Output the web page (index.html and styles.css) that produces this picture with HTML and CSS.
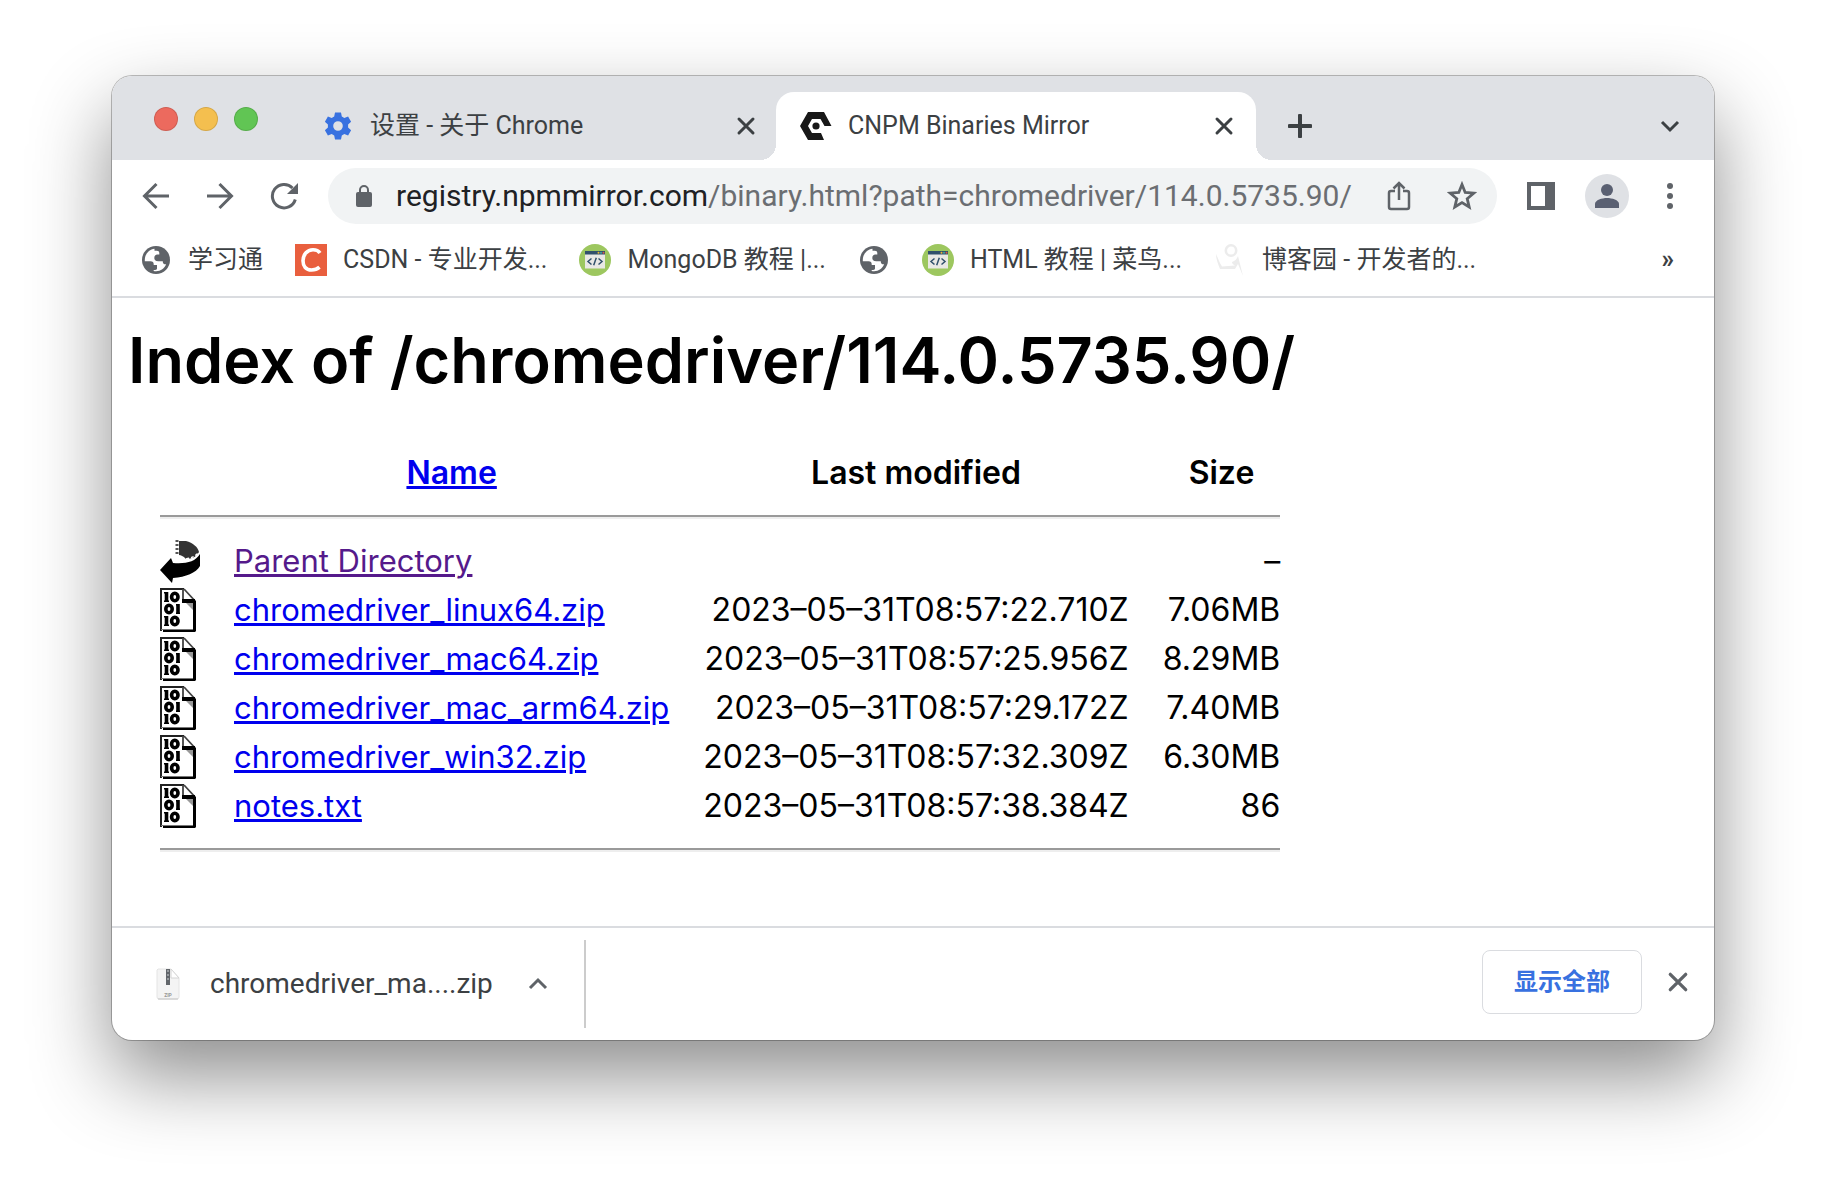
FILE: index.html
```html
<!DOCTYPE html>
<html lang="zh-CN">
<head>
  <meta charset="UTF-8" />
  <meta name="viewport" content="width=device-width, initial-scale=1.0"/>
  <title>CNPM Binaries Mirror</title>
  <link rel="stylesheet" href="styles.css">
</head>
<body>
  <!-- shared icons -->
  <svg class="sprite" aria-hidden="true">
    <symbol id="close" viewBox="0 0 20 20"><path d="M3 3 17 17M17 3 3 17" fill="none" stroke="currentColor" stroke-width="3" stroke-linecap="round"/></symbol>
    <symbol id="globe" viewBox="-2 -2 32 32">
      <circle cx="14" cy="14" r="14" fill="#5f6368"/>
      <path d="M12.500 2.700C7 3.300 2.800 8.200 2.800 14v1.200h5.700c2.300 0 3.200 1.200 3.200 3v.9h3.300v3.300c0 1.500-1.300 1.500-3.300 1.500v1.100c5.800 1.200 10.600-2 12.400-6.700-1.400.3-3.300-.3-3.300-2.200v-.9h-4.600c-2.800 0-3.900-1.600-3.900-3.300 0-2.200 1.500-3.300 3.900-3.300h1.100V6.900c0-1.400-1-2.200-2.400-2.200h-2.400z" fill="#fff"/>
    </symbol>
    <symbol id="runoob" viewBox="0 0 32 32">
      <circle cx="16" cy="16" r="16" fill="#9dc75f"/>
      <path d="M6 7h20v17.500H6z" fill="#e9e8e4"/>
      <path d="M6 7h20v3.500H6z" fill="#31506b"/>
      <circle cx="19.500" cy="8.800" r="1" fill="#e8b53a"/><circle cx="22" cy="8.800" r="1" fill="#3fa9a0"/><circle cx="24.500" cy="8.800" r="1" fill="#dc5847"/>
      <path d="M12.500 14.500 9 17.500l3.500 3M19.500 14.500l3.500 3-3.500 3M17.300 13.800l-2.600 7.400" fill="none" stroke="#31506b" stroke-width="1.500"/>
    </symbol>
    <symbol id="binary" viewBox="0 0 36 44">
      <path d="M1 1h23l11 12v30H1z" fill="#fff"/>
      <path d="M25 14h9v9z" fill="#999"/>
      <path d="M1 43V1h23" fill="none" stroke="#222" stroke-width="2"/>
      <path d="M23 1v12h12L24 1" fill="#fff" stroke="#444" stroke-width="1.800"/>
      <path d="M22 13h13" stroke="#000" stroke-width="4"/>
      <path d="M34.500 13v30M3 42.500h32.500" fill="none" stroke="#000" stroke-width="3"/>
      <path d="M1 41.500h32" stroke="#777"/>
      <g fill="none" stroke="#000" stroke-width="3.600">
        <path d="M6.500 4v10M18 16v10M6.500 28v10"/>
        <path d="M4 4.800h3M4 13.200h5M4 28.800h3M4 37.200h5M16 16.800h3M16 25.200h4" stroke-width="1.600"/>
        <ellipse cx="14.800" cy="9" rx="3.200" ry="3.800"/><ellipse cx="9" cy="21" rx="3.200" ry="3.800"/><ellipse cx="14.800" cy="33" rx="3.200" ry="3.800"/>
      </g>
    </symbol>
  </svg>

  <div class="window">
    <header class="tab-strip">
      <div class="lights">
        <button class="light red" aria-label="Close window"></button>
        <button class="light yellow" aria-label="Minimize"></button>
        <button class="light green" aria-label="Zoom"></button>
      </div>
      <div class="tab">
        <svg class="tab-icon" viewBox="0 0 28 28"><path fill="#3871e0" fill-rule="evenodd" d="M11 .5h6l.8 4 2.500 1.500 3.800-1.400 3 5.200-3 2.700v3l3 2.700-3 5.200-3.800-1.400-2.500 1.500-.8 4h-6l-.8-4L7.700 22l-3.800 1.400-3-5.200 3-2.700v-3l-3-2.700 3-5.200L7.700 6l2.500-1.500zM14 9.200a4.800 4.800 0 1 0 0 9.600 4.800 4.800 0 1 0 0-9.600z"/></svg>
        <span class="tab-title">设置 - 关于 Chrome</span>
        <button class="icon-btn" aria-label="Close tab"><svg width="20" height="20"><use href="#close"/></svg></button>
      </div>
      <div class="tab active">
        <svg class="tab-icon" viewBox="0 0 32 28"><path fill="#181818" d="M8 0h16l7.500 14h-7L20.500 7H12l-4 7 4 7h9l3 7H8L0 14z"/><circle cx="16" cy="14" r="3.600" fill="#181818"/></svg>
        <span class="tab-title">CNPM Binaries Mirror</span>
        <button class="icon-btn" aria-label="Close tab"><svg width="20" height="20"><use href="#close"/></svg></button>
      </div>
      <button class="icon-btn new-tab" aria-label="New tab"><svg width="24" height="24" viewBox="0 0 24 24"><path d="M12 1.500v21M1.500 12h21" stroke="currentColor" stroke-width="4" stroke-linecap="round"/></svg></button>
      <button class="icon-btn tab-search" aria-label="Search tabs"><svg width="20" height="20" viewBox="0 0 20 20"><path d="m2 6 8 8 8-8" fill="none" stroke="currentColor" stroke-width="3"/></svg></button>
    </header>

    <nav class="toolbar">
      <div class="nav-buttons">
        <button class="icon-btn" aria-label="Back"><svg width="28" height="28" viewBox="0 0 28 28"><path d="M14.500 2 2.500 14l12 12M3 14h24" fill="none" stroke="currentColor" stroke-width="3"/></svg></button>
        <button class="icon-btn" aria-label="Forward"><svg width="28" height="28" viewBox="0 0 28 28"><path d="m13.500 2 12 12-12 12M25 14H1" fill="none" stroke="currentColor" stroke-width="3"/></svg></button>
        <button class="icon-btn" aria-label="Reload"><svg width="28" height="28" viewBox="0 0 28 28"><path d="M25.300 17.500A11.700 11.700 0 1 1 22.500 6" fill="none" stroke="currentColor" stroke-width="3"/><path d="M28 1v11H17z" fill="currentColor"/></svg></button>
      </div>
      <div class="omnibox">
        <svg width="16" height="22" viewBox="0 0 16 22"><rect y="7" width="16" height="15" rx="2" fill="currentColor"/><path d="M4 8V5a4 4 0 0 1 8 0v3" fill="none" stroke="currentColor" stroke-width="2"/></svg>
        <a class="url" href="#">registry.npmmirror.com<span class="path">/binary.html?path=chromedriver/114.0.5735.90/</span></a>
        <button class="icon-btn" aria-label="Share"><svg width="24" height="30" viewBox="0 0 24 30"><path d="M8 10H4a2 2 0 0 0-2 2v14a2 2 0 0 0 2 2h16a2 2 0 0 0 2-2V12a2 2 0 0 0-2-2h-4M12 19V3M6.500 7.500 12 2l5.500 5.500" fill="none" stroke="currentColor" stroke-width="2.500"/></svg></button>
        <button class="icon-btn star" aria-label="Bookmark"><svg width="30" height="30" viewBox="0 0 30 30"><path d="m15 3.500 3.200 8 8.500.7-6.500 5.500 2 8.300-7.200-4.400L7.800 26l2-8.300-6.500-5.500 8.500-.7z" fill="none" stroke="currentColor" stroke-width="2.800"/></svg></button>
      </div>
      <button class="icon-btn" aria-label="Side panel"><svg width="28" height="28" viewBox="0 0 28 28"><path d="M0 0h28v28H0zM4 4v20h14V4z" fill="currentColor" fill-rule="evenodd"/></svg></button>
      <button class="avatar" aria-label="Profile"><svg width="24" height="24" viewBox="0 0 24 24"><circle cx="12" cy="6" r="6" fill="#5a6072"/><path d="M0 24v-4c0-4 7-6 12-6s12 2 12 6v4z" fill="#5a6072"/></svg></button>
      <button class="icon-btn menu" aria-label="Menu"><svg width="6" height="26" viewBox="0 0 6 26"><g fill="currentColor"><circle cx="3" cy="3" r="3"/><circle cx="3" cy="13" r="3"/><circle cx="3" cy="23" r="3"/></g></svg></button>
    </nav>

    <nav class="bookmarks">
      <a href="#"><svg width="32" height="32"><use href="#globe"/></svg>学习通</a>
      <a href="#"><svg width="32" height="32" viewBox="0 0 32 32"><path d="M0 0h32v32H0z" fill="#e95f3e"/><path d="M25 9c-1.500-2.200-4-3.200-7-3.200-6 0-10 5-10 11 0 5.500 3 9.200 8.500 9.200 3.500 0 6-1 8-2.800" fill="none" stroke="#fff" stroke-width="3.600"/></svg>CSDN - 专业开发...</a>
      <a href="#"><svg width="32" height="32"><use href="#runoob"/></svg>MongoDB 教程 |...</a>
      <a href="#" aria-label="Bookmark"><svg width="32" height="32"><use href="#globe"/></svg></a>
      <a href="#"><svg width="32" height="32"><use href="#runoob"/></svg>HTML 教程 | 菜鸟...</a>
      <a href="#"><svg width="32" height="32" viewBox="0 0 32 32"><circle cx="17" cy="6.500" r="5.200" fill="none" stroke="#ececec" stroke-width="2.600"/><path d="M2 10c2 4 3 8 6 12.500l13-1c-2-1-3-2-3-3.500 3-1 5-3 6-6l5 20-5-12c-1 2-2 3-3 5H6C4 20 2 15 2 10z" fill="#ececec"/></svg>博客园 - 开发者的...</a>
      <button class="more" aria-label="More bookmarks">»</button>
    </nav>

    <main class="page">
      <h1>Index of /chromedriver/114.0.5735.90/</h1>
      <table class="listing">
        <thead>
          <tr><th></th><th><a href="#">Name</a></th><th>Last modified</th><th>Size</th></tr>
          <tr class="rule"><td colspan="4"><hr></td></tr>
        </thead>
        <tbody>
          <tr>
            <td><svg width="40" height="44" viewBox="0 0 40 44"><path d="M19 2h7c7 2 12 6 13 11-3 5-7 7-13 7-3-3-5-4-7-4z" fill="#333"/><path d="M17 1v15" stroke="#555" stroke-width="3" stroke-dasharray="2 2"/><path d="M26 20c6-1 10-3 13-7" fill="none" stroke="#fff" stroke-width="1.500" stroke-dasharray="3 2"/><path d="M40 15v12c-4 7-14 11-27 12l-1 5L0 31l11-12 2 5c13 1 22-1 27-9z" fill="#000"/></svg></td>
            <td><a class="visited" href="#">Parent Directory</a></td><td></td><td>–</td>
          </tr>
          <tr><td><svg width="36" height="44"><use href="#binary"/></svg></td><td><a href="#">chromedriver_linux64.zip</a></td><td>2023–05–31T08:57:22.710Z</td><td>7.06MB</td></tr>
          <tr><td><svg width="36" height="44"><use href="#binary"/></svg></td><td><a href="#">chromedriver_mac64.zip</a></td><td>2023–05–31T08:57:25.956Z</td><td>8.29MB</td></tr>
          <tr><td><svg width="36" height="44"><use href="#binary"/></svg></td><td><a href="#">chromedriver_mac_arm64.zip</a></td><td>2023–05–31T08:57:29.172Z</td><td>7.40MB</td></tr>
          <tr><td><svg width="36" height="44"><use href="#binary"/></svg></td><td><a href="#">chromedriver_win32.zip</a></td><td>2023–05–31T08:57:32.309Z</td><td>6.30MB</td></tr>
          <tr><td><svg width="36" height="44"><use href="#binary"/></svg></td><td><a href="#">notes.txt</a></td><td>2023–05–31T08:57:38.384Z</td><td>86</td></tr>
          <tr class="rule"><td colspan="4"><hr></td></tr>
        </tbody>
      </table>
    </main>

    <footer class="downloads">
      <div class="download-item">
        <svg width="24" height="32" viewBox="0 0 24 32"><path d="M2 1h13l8 9v19a2 2 0 0 1-2 2H3a2 2 0 0 1-2-2V2z" fill="#f4f4f4" stroke="#e4e4e4"/><path d="M2 31h20" stroke="#c4c4c4"/><path d="M15 1v9h8z" fill="#fff" stroke="#d4d4d4"/><path d="M10 1h4v16h-4z" fill="#62666b"/><path d="M12 2v12" stroke="#cfd3d6" stroke-dasharray="2 2"/><text x="12" y="29" class="zip-label">ZIP</text></svg>
        <span class="download-name">chromedriver_ma....zip</span>
        <button class="icon-btn" aria-label="Download options"><svg width="20" height="20" viewBox="0 0 20 20"><path d="m2 14 8-8 8 8" fill="none" stroke="currentColor" stroke-width="3"/></svg></button>
      </div>
      <div class="shelf-actions">
        <button class="show-all">显示全部</button>
        <button class="icon-btn" aria-label="Close downloads"><svg width="22" height="22"><use href="#close"/></svg></button>
      </div>
    </footer>
  </div>
</body>
</html>
```

FILE: styles.css
```css
* { box-sizing: border-box; }
body {
  margin: 0;
  padding: 76px 112px 148px;
  min-height: 100vh;
  background: #fff;
  font-family: Roboto, "Noto Sans CJK SC", sans-serif;
  font-size: 25px;
  line-height: 32px;
  color: #3c4043;
  display: flex;
}
button {
  padding: 0;
  border: none;
  background: none;
  font: inherit;
  color: inherit;
  cursor: pointer;
}
svg { display: block; flex: none; }
.sprite { position: absolute; width: 0; height: 0; }
.window {
  flex: 1;
  min-width: 0;
  display: flex;
  flex-direction: column;
  background: #fff;
  border-radius: 20px;
  overflow: hidden;
  box-shadow: 0 0 0 1px rgba(0, 0, 0, 0.25), 0 36px 80px rgba(0, 0, 0, 0.45);
}
.icon-btn {
  display: flex;
  align-items: center;
  justify-content: center;
  flex: none;
}

/* tab strip */
.tab-strip {
  display: flex;
  height: 84px;
  padding: 16px 34px 0 42px;
  background: #dfe1e5;
}
.lights {
  display: flex;
  gap: 16px;
  padding-top: 15px;
  width: 144px;
}
.light {
  width: 24px;
  height: 24px;
  border-radius: 50%;
  border: 1px solid rgba(0, 0, 0, 0.12);
}
.red { background: #ec6a5e; }
.yellow { background: #f4bf4f; }
.green { background: #61c554; }
.tab {
  position: relative;
  display: flex;
  align-items: center;
  width: 480px;
  padding: 0 22px 0 24px;
  border-radius: 18px 18px 0 0;
}
.tab.active { margin-left: -2px; background: #fff; }
.tab.active::before,
.tab.active::after {
  content: "";
  position: absolute;
  bottom: 0;
  width: 16px;
  height: 16px;
}
.tab.active::before {
  right: 100%;
  background: radial-gradient(circle at 0 0, transparent 16px, #fff 16px);
}
.tab.active::after {
  left: 100%;
  background: radial-gradient(circle at 100% 0, transparent 16px, #fff 16px);
}
.tab-icon { width: 32px; height: 28px; }
.tab-title { flex: 1; margin-left: 16px; }
.new-tab { margin-left: 32px; }
.tab-search { margin-left: auto; }

/* toolbar */
.toolbar {
  display: flex;
  align-items: center;
  gap: 30px;
  padding: 8px 41px 8px 30px;
  color: #5f6368;
}
.nav-buttons { display: flex; gap: 36px; }
.omnibox {
  flex: 1;
  display: flex;
  align-items: center;
  height: 56px;
  padding: 0 20px 0 28px;
  border-radius: 28px;
  background: #f1f3f4;
}
.url {
  flex: 1;
  margin-left: 24px;
  font-size: 30px;
  color: #202124;
  text-decoration: none;
  white-space: nowrap;
}
.path { color: #6b6e72; }
.star { margin-left: 36px; }
.menu { margin-left: 8px; }
.avatar {
  width: 44px;
  height: 44px;
  border-radius: 50%;
  background: #dfe1e5;
  display: flex;
  align-items: center;
  justify-content: center;
}

/* bookmarks bar */
.bookmarks {
  display: flex;
  align-items: center;
  gap: 32px;
  height: 66px;
  padding: 0 40px 8px 28px;
  border-bottom: 2px solid #dadce0;
  white-space: nowrap;
}
.bookmarks a {
  display: flex;
  align-items: center;
  gap: 16px;
  color: inherit;
  text-decoration: none;
}
.more { margin-left: auto; font-weight: 700; }

/* directory listing */
.page {
  flex: 1;
  padding: 26px 16px;
  font-family: Inter, "Liberation Sans", sans-serif;
  font-size: 32px;
  color: #000;
}
h1 {
  margin: 0 0 52px;
  font-size: 63px;
  line-height: 72px;
  font-weight: 600;
}
.listing {
  margin-left: 15px;
  border-collapse: collapse;
}
.listing th, .listing td {
  height: 49px;
  padding: 0 17px;
  line-height: 40px;
  white-space: nowrap;
}
.listing th { font-weight: 600; }
.listing td:nth-child(2) { font-size: 31px; }
.listing td:nth-child(n+3) { text-align: right; }
.listing tr.rule td { height: 39px; }
.listing a { color: #0000ee; }
.listing a.visited { color: #551a8b; }
hr {
  height: 4px;
  margin: 0;
  border: none;
  border-top: 2px solid #9a9a9a;
  background: #eee;
}

/* downloads shelf */
.downloads {
  display: flex;
  align-items: center;
  justify-content: space-between;
  height: 114px;
  border-top: 2px solid #dadce0;
  color: #5f6368;
}
.download-item {
  display: flex;
  align-items: center;
  height: 88px;
  width: 474px;
  padding: 0 36px 0 44px;
  border-right: 2px solid #ccc;
}
.download-name { flex: 1; margin-left: 30px; color: #3c4043; font-size: 28px; }
.zip-label { font-size: 5px; font-weight: 700; text-anchor: middle; fill: #999; }
.shelf-actions {
  display: flex;
  align-items: center;
  gap: 25px;
  padding: 0 25px 4px 0;
}
.show-all {
  width: 160px;
  height: 64px;
  border: 1px solid #dadce0;
  border-radius: 8px;
  color: #3871e0;
  font-size: 24px;
  font-weight: 600;
}
```
